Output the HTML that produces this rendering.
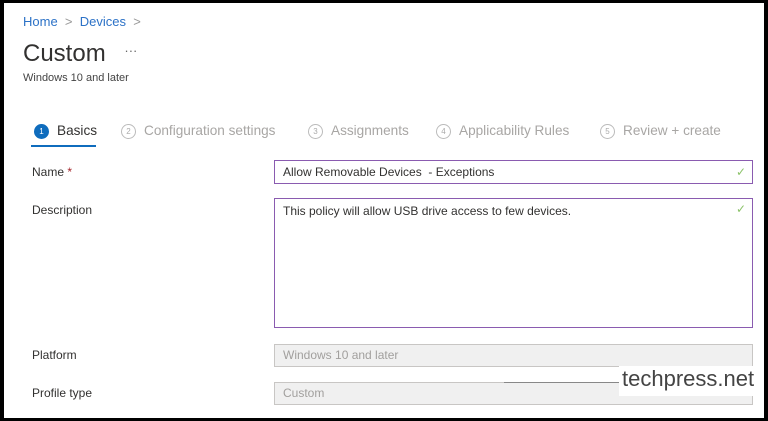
<!DOCTYPE html>
<html><head><style>
*{margin:0;padding:0;box-sizing:border-box}
body{width:768px;height:421px;background:#000;font-family:"Liberation Sans",sans-serif;position:relative;overflow:hidden}
#p{position:absolute;left:4px;top:3px;width:760px;height:415px;background:#fff;overflow:hidden}
.a{position:absolute;white-space:nowrap}
.in{position:absolute;left:270px;width:479px;border:1px solid #8a5bb0;font-size:12px;color:#323130;padding-left:8px}
.dis{position:absolute;left:270px;width:479px;border:1px solid #c8c6c4;background:#f0f0f0;font-size:12px;color:#a19f9d;padding-left:8px;height:23px;line-height:21px}
.ck{position:absolute;right:6px;color:#8cc36a;font-size:12px}
.st{color:#a8a6a4;font-size:13.6px}
.c{display:inline-block;width:15px;height:15px;border:1px solid #bbb;border-radius:50%;font-size:8px;text-align:center;line-height:13px;color:#aaa;vertical-align:1px;margin-right:8px}
</style></head><body><div id="p">
<div class="a" style="left:19px;top:11px;font-size:13px;color:#2c72c7">Home <span style="color:#999">&nbsp;&gt;&nbsp;</span> Devices <span style="color:#999">&nbsp;&gt;</span></div>
<div class="a" style="left:19px;top:37px;font-size:24px;color:#323130">Custom <span style="font-size:13px;color:#666;margin-left:12px;vertical-align:6px">···</span></div>
<div class="a" style="left:19px;top:69px;font-size:11px;color:#444">Windows 10 and later</div>
<div class="a" style="left:30px;top:120px;font-size:13.6px;color:#323130"><span class="c" style="background:#0f6cbd;border-color:#0f6cbd;color:#fff">1</span>Basics</div>
<div class="a" style="left:27px;top:142px;width:65px;height:2px;background:#0f6cbd"></div>
<div class="a st" style="left:117px;top:120px"><span class="c">2</span>Configuration settings</div>
<div class="a st" style="left:304px;top:120px"><span class="c">3</span>Assignments</div>
<div class="a st" style="left:432px;top:120px"><span class="c">4</span>Applicability Rules</div>
<div class="a st" style="left:596px;top:120px"><span class="c">5</span>Review + create</div>
<div class="a" style="left:28px;top:162px;font-size:12px;color:#323130">Name <span style="color:#a4262c">*</span></div>
<div class="in" style="top:157px;height:24px;line-height:22px">Allow Removable Devices &nbsp;- Exceptions<span class="ck">✓</span></div>
<div class="a" style="left:28px;top:200px;font-size:12px;color:#323130">Description</div>
<div class="in" style="top:195px;height:130px;padding-top:5px">This policy will allow USB drive access to few devices.<span class="ck" style="top:3px">✓</span></div>
<div class="a" style="left:28px;top:345px;font-size:12px;color:#323130">Platform</div>
<div class="dis" style="top:341px">Windows 10 and later</div>
<div class="a" style="left:28px;top:383px;font-size:12px;color:#323130">Profile type</div>
<div class="dis" style="top:379px">Custom</div>
<div class="a" style="left:500px;top:379px;width:120px;height:1px;background:#888"></div>
<div class="a" style="left:615px;top:363px;background:#fff;font-size:22px;color:#444;padding:0 3px 4px 3px">techpress.net</div>
</div></body></html>
